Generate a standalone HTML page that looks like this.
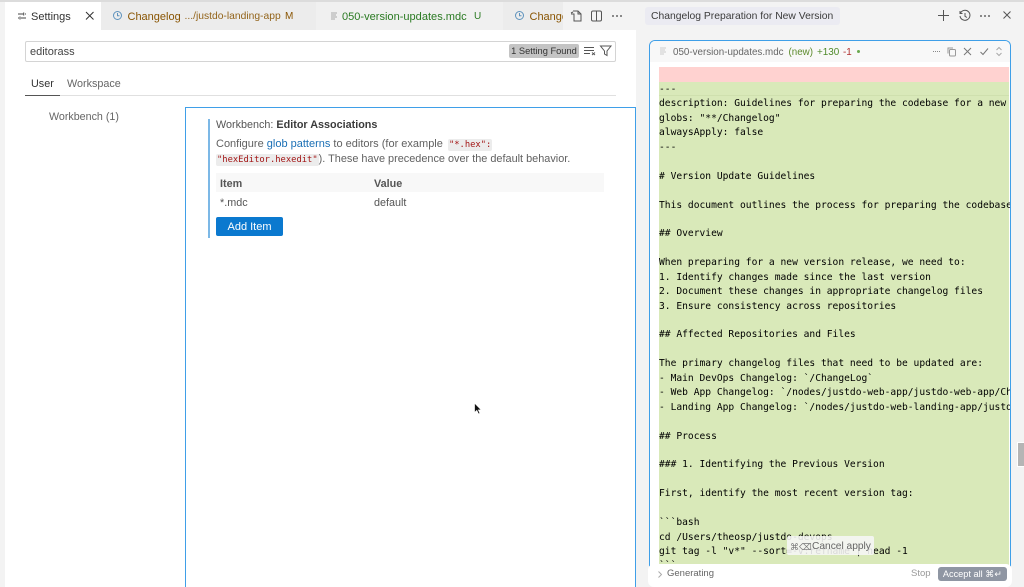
<!DOCTYPE html>
<html><head><meta charset="utf-8"><style>
*{box-sizing:border-box}
html,body{margin:0;padding:0;width:1024px;height:587px;overflow:hidden;background:#f3f3f3}
body{position:relative;font-family:"Liberation Sans",sans-serif;color:#3b3b3b}
.a{position:absolute}
.t{position:absolute;white-space:nowrap;font-size:11px;line-height:14px;margin-top:1px}
svg{position:absolute;overflow:visible;fill:none}
#code{position:absolute;left:659px;top:83px;width:351px;overflow:hidden;font:9.62px/14.43px "DejaVu Sans Mono",monospace;color:#000;white-space:pre;height:488px}
code{font:8.8px "DejaVu Sans Mono",monospace;color:#a31515;background:#ececec;border-radius:2px;padding:1px}
</style></head><body>
<div class="a" style="left:0;top:0;width:1024px;height:2px;background:#dcdcdc"></div>
<div class="a" style="left:5px;top:2px;width:631px;height:585px;background:#fff"></div>
<div class="a" style="left:5px;top:2px;width:96px;height:28px;background:#fff"></div>
<div class="a" style="left:101px;top:2px;width:215px;height:28px;background:#ececec"></div>
<div class="a" style="left:316px;top:2px;width:187px;height:28px;background:#f0f0f0"></div>
<div class="a" style="left:503px;top:2px;width:60px;height:28px;background:#ececec"></div>
<div class="a" style="left:563px;top:2px;width:73px;height:28px;background:#f3f3f3"></div>

<svg style="left:17px;top:11px" width="10" height="10" stroke="#444"><path d="M1 3h5M8 3h1M1 7h1M4 7h5M6.7 1.500v3M3 5.500v3"/></svg>
<div class="t" style="left:31px;top:9px;color:#333">Settings</div>
<svg style="left:85px;top:11px" width="10" height="10" stroke="#333"><path d="M1 1l7.500 7.500M8.500 1l-7.500 7.500"/></svg>
<svg style="left:113px;top:11px" width="10" height="10" stroke="#5f93bd"><circle cx="4.500" cy="4.500" r="4"/><path d="M4.500 2v2.800h2"/></svg>
<div class="t" style="left:127.5px;top:9px;color:#895503">Changelog</div>
<div class="t" style="left:184.5px;top:9px;color:#895503;font-size:10.3px;opacity:.9">.../justdo-landing-app</div>
<div class="t" style="left:285px;top:9px;color:#895503;font-size:10px">M</div>
<svg style="left:330px;top:12px" width="9" height="9" stroke="#aaa"><path d="M1 1h6M1 3h5M1 5h6M1 7h4"/></svg>
<div class="t" style="left:342px;top:9px;color:#2a7a22;font-size:11.05px">050-version-updates.mdc</div>
<div class="t" style="left:474px;top:9px;color:#2a7a22;font-size:10px">U</div>
<svg style="left:515px;top:11px" width="10" height="10" stroke="#5f93bd"><circle cx="4.500" cy="4.500" r="4"/><path d="M4.500 2v2.800h2"/></svg>
<div class="a" style="left:529.5px;top:10px;width:33px;overflow:hidden"><div style="font-size:11px;line-height:14px;color:#895503;white-space:nowrap">Changelog</div></div>
<svg style="left:570px;top:10px" width="12" height="12" stroke="#555"><path d="M1 3l2-1M3 1h5l3 3v7H4V4H1"/><path d="M8 1v3h3"/></svg>
<svg style="left:591px;top:10px" width="11" height="12" stroke="#555"><rect x=".5" y="1" width="10" height="10" rx="1.500"/><path d="M5.500 1v10"/></svg>
<div class="a" style="left:612px;top:15px;width:10px;height:2px;background:radial-gradient(circle at 1px 1px,#666 1px,transparent 1px) 0 0/4px 2px repeat-x"></div>

<!-- search -->
<div class="a" style="left:25px;top:41px;width:591px;height:21px;background:#fff;border:1px solid #d4d4d4;border-radius:2px"></div>
<div class="t" style="left:30px;top:44px;color:#444">editorass</div>
<div class="a" style="left:509px;top:44px;width:70px;height:14px;background:#c4c4c4;border-radius:2px;color:#333;font-size:9.3px;line-height:14px;text-align:center;white-space:nowrap">1 Setting Found</div>
<svg style="left:584px;top:47px" width="12" height="9" stroke="#555"><path d="M0 .5h10M0 3.500h10M0 6.500h6M8 5.500l3 2.500M11 5.500l-3 2.500" stroke-width=".9"/></svg>
<svg style="left:600px;top:45px" width="12" height="12" stroke="#555"><path d="M.5 1h10.500L7 6v4.500L4.500 9V6z"/></svg>

<div class="t" style="left:31px;top:76px;color:#333;font-size:10.8px">User</div>
<div class="t" style="left:67px;top:76px;color:#666;font-size:10.8px">Workspace</div>
<div class="a" style="left:25px;top:95px;width:591px;height:1px;background:#e0e0e0"></div>
<div class="a" style="left:25px;top:95px;width:35px;height:1px;background:#555"></div>
<div class="t" style="left:49px;top:109px;color:#666;font-size:10.7px">Workbench (1)</div>

<!-- setting box -->
<div class="a" style="left:185px;top:107px;width:451px;height:1px;background:#3f9fe8"></div>
<div class="a" style="left:185px;top:107px;width:1px;height:480px;background:#3f9fe8"></div>
<div class="a" style="left:635px;top:107px;width:1px;height:480px;background:#3f9fe8"></div>
<div class="a" style="left:208px;top:119px;width:2px;height:119px;background:#7cb8e6"></div>
<div class="t" style="left:216px;top:117px;color:#555;font-size:10.8px">Workbench: <b style="color:#3b3b3b">Editor Associations</b></div>
<div class="t" style="left:216px;top:136px;color:#616161">Configure <span style="color:#1a6fb5">glob patterns</span> to editors (for example <code style="margin-left:2px">"*.hex":</code></div>
<div class="t" style="left:216px;top:151px;color:#616161;font-size:10.9px"><code>"hexEditor.hexedit"</code>). These have precedence over the default behavior.</div>
<div class="a" style="left:216px;top:173px;width:388px;height:19px;background:#f8f8f8"></div>
<div class="t" style="left:220px;top:176px;color:#555;font-weight:bold;font-size:10.8px">Item</div>
<div class="t" style="left:374px;top:176px;color:#555;font-weight:bold;font-size:10.8px">Value</div>
<div class="t" style="left:220px;top:195px;color:#555;font-size:10.8px">*.mdc</div>
<div class="t" style="left:374px;top:195px;color:#555;font-size:10.8px">default</div>
<div class="a" style="left:216px;top:217px;width:67px;height:19px;background:#0b79cf;border-radius:2px;color:#fff;font-size:11px;line-height:20px;text-align:center">Add Item</div>

<!-- cursor -->
<svg style="left:473px;top:402px" width="9" height="14"><path d="M1.500 1v9.500l2.300-2 1.700 3.500 1.500-.7-1.600-3.300h3z" fill="#111" stroke="#fff" stroke-width=".7"/></svg>

<!-- right header -->
<div class="a" style="left:645px;top:7px;width:195px;height:18px;background:#ebebf2;border-radius:3px"></div>
<div class="t" style="left:651px;top:9px;color:#3b3b3b;font-size:10.35px">Changelog Preparation for New Version</div>
<svg style="left:938px;top:10px" width="11" height="11" stroke="#555"><path d="M5.500 0v11M0 5.500h11"/></svg>
<svg style="left:959px;top:10px" width="12" height="12" stroke="#555"><path d="M1.500 3A5 5 0 1 1 1 6M1 1v2.500h2.500M6 3v3.300l2 1.200"/></svg>
<div class="a" style="left:980px;top:15px;width:11px;height:2px;background:radial-gradient(circle at 1px 1px,#666 1px,transparent 1px) 0 0/4px 2px repeat-x"></div>
<svg style="left:1003px;top:11px" width="9" height="9" stroke="#555"><path d="M.5.500l7 7M7.500.500l-7 7"/></svg>

<!-- diff panel -->
<div class="a" style="left:649px;top:40px;width:362px;height:530px;background:#fff;border:1px solid #3f9fe8;border-bottom:0;border-radius:6px 6px 0 0"></div>
<div class="a" style="left:650px;top:41px;width:360px;height:21px;background:#f8f8f8;border-radius:5px 5px 0 0"></div>
<svg style="left:660px;top:47px" width="8" height="9" stroke="#ccc"><path d="M0 1h6M0 3h5M0 5h6M0 7h4"/></svg>
<div class="t" style="left:673px;top:45px;color:#666;font-size:9.8px">050-version-updates.mdc</div>
<div class="t" style="left:788.5px;top:45px;color:#5c8a2c;font-size:9.8px">(new)</div>
<div class="t" style="left:817px;top:45px;color:#4f8a2a;font-size:9.9px">+130</div>
<div class="t" style="left:843px;top:45px;color:#b03030;font-size:9.9px">-1</div>
<div class="a" style="left:857px;top:50px;width:3px;height:3px;background:#6aa84f;border-radius:50%"></div>
<div class="a" style="left:933px;top:51px;width:7px;height:1px;background:repeating-linear-gradient(90deg,#888 0 1px,transparent 1px 2px)"></div>
<svg style="left:947px;top:47px" width="9" height="9" stroke="#999"><rect x="2.500" y="2.500" width="6" height="6.500" rx="1"/><path d="M1 6.500V1h5"/></svg>
<svg style="left:964px;top:48px" width="7" height="7" stroke="#777"><path d="M0 0l7 7M7 0l-7 7"/></svg>
<svg style="left:980px;top:48px" width="8" height="7" stroke="#777"><path d="M.5 4l2.500 2.500L8 .5"/></svg>
<svg style="left:996px;top:47px" width="6" height="9" stroke="#aaa"><path d="M.5 3L3 .5 5.500 3M.5 6L3 8.500 5.500 6"/></svg>
<div class="a" style="left:659px;top:67px;width:350px;height:15px;background:#ffd2d0"></div>
<div class="a" style="left:659px;top:82px;width:350px;height:489px;background:#d9e9b9"></div>
<div class="a" style="left:659px;top:95px;width:350px;height:1px;background:#cfe0ae"></div>
<div id="code">---
description: Guidelines for preparing the codebase for a new version release
globs: "**/Changelog"
alwaysApply: false
---

# Version Update Guidelines

This document outlines the process for preparing the codebase for a new version

## Overview

When preparing for a new version release, we need to:
1. Identify changes made since the last version
2. Document these changes in appropriate changelog files
3. Ensure consistency across repositories

## Affected Repositories and Files

The primary changelog files that need to be updated are:
- Main DevOps Changelog: &#96;/ChangeLog&#96;
- Web App Changelog: &#96;/nodes/justdo-web-app/justdo-web-app/ChangeLog&#96;
- Landing App Changelog: &#96;/nodes/justdo-web-landing-app/justdo-landing-app/ChangeLog&#96;

## Process

### 1. Identifying the Previous Version

First, identify the most recent version tag:

&#96;&#96;&#96;bash
cd /Users/theosp/justdo-devops
git tag -l "v*" --sort=-v:refname | head -1
&#96;&#96;&#96;</div>

<!-- cancel apply -->
<div class="a" style="left:787px;top:536px;width:87px;height:19px;background:rgba(246,246,246,.88);border-radius:2px"></div>
<div class="t" style="left:790px;top:539px;color:#777;font-size:9px">⌘⌫</div>
<div class="t" style="left:812px;top:539px;color:#666;font-size:10.2px">Cancel apply</div>

<!-- footer -->
<div class="a" style="left:648px;top:564px;width:364px;height:23px;background:#fff;border-radius:6px"></div>
<svg style="left:658px;top:571px" width="5" height="7" stroke="#aaa"><path d="M.5.500l3 3-3 3"/></svg>
<div class="t" style="left:667px;top:566px;color:#666;font-size:9.5px">Generating</div>
<div class="t" style="left:911px;top:566px;color:#999;font-size:9.5px">Stop</div>
<div class="a" style="left:938px;top:567px;width:69px;height:14px;background:#8f96a3;border-radius:3px;color:#fff;font-size:9.2px;line-height:14px;text-align:center;white-space:nowrap">Accept all ⌘↵</div>

<!-- scrollbar -->
<div class="a" style="left:1017px;top:442px;width:7px;height:25px;background:#fff"></div>
<div class="a" style="left:1018px;top:443px;width:6px;height:23px;background:#b5b5b5"></div>
</body></html>
